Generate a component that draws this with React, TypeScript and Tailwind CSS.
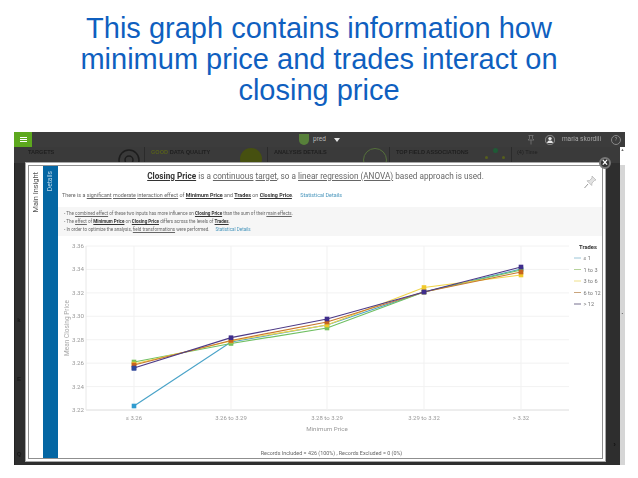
import React from "react";

const px = [135, 232, 328, 425, 522];
const series = [
  { c: "#4aa3c8", m: "#2f9bd0", y: [406, 342, 325, 292, 269] },
  { c: "#6fbf62", m: "#76c05a", y: [362, 343.5, 328, 292, 270] },
  { c: "#f1d54a", m: "#f0c92c", y: [364, 341, 325, 287.5, 275] },
  { c: "#c9792f", m: "#c8641e", y: [365, 340.5, 322, 292, 272] },
  { c: "#4d3a86", m: "#3f2d8c", y: [368, 337.7, 319, 292, 267] },
];
const yLabels = ["3.36", "3.34", "3.32", "3.30", "3.28", "3.26", "3.24", "3.22"];
const xLabels = ["≤ 3.26", "3.26 to 3.29", "3.28 to 3.29", "3.29 to 3.32", "> 3.32"];
const legend = [
  ["≤ 1", "#9cc6d8"],
  ["1 to 3", "#b5d29a"],
  ["3 to 6", "#efe08a"],
  ["6 to 12", "#c9a47c"],
  ["> 12", "#77708f"],
];

function Chart() {
  // coordinates are page pixels; the svg origin sits at page (59, 236)
  const ox = 59;
  const oy = 236;
  return (
    <svg width="544" height="204" viewBox={`${ox} ${oy} 544 204`} className="block shrink-0" style={{ fontFamily: "Roboto, sans-serif" }}>
      {yLabels.map((l, i) => {
        const y = 246 + i * 23.43;
        return (
          <g key={l}>
            <line x1="87" x2="570" y1={y} y2={y} stroke={i === 7 ? "#dcdcdc" : "#f2f2f2"} strokeWidth="1" />
            <text x="85" y={y + 2} fontSize="6.2" textAnchor="end" fill="#999">{l}</text>
          </g>
        );
      })}
      <line x1="87" x2="87" y1="246" y2="410" stroke="#e8e8e8" />
      {px.map((x, i) => (
        <g key={x}>
          <line x1={x} x2={x} y1="246" y2="410" stroke="#f1f1f1" />
          <text x={x} y="419.500" fontSize="6" textAnchor="middle" fill="#999">{xLabels[i]}</text>
        </g>
      ))}
      <text x="328" y="431" fontSize="6.2" textAnchor="middle" fill="#999">Minimum Price</text>
      <text transform="translate(70 328) rotate(-90)" fontSize="6.5" textAnchor="middle" fill="#aaa">Mean Closing Price</text>
      {series.map((s) => (
        <g key={s.c}>
          <polyline points={s.y.map((y, i) => `${px[i]},${y}`).join(" ")} fill="none" stroke={s.c} strokeWidth="1.2" />
          {s.y.map((y, i) => (
            <rect key={i} x={px[i] - 2.3} y={y - 2.3} width="4.6" height="4.6" fill={s.m} />
          ))}
        </g>
      ))}
      <rect x="132.700" y="366" width="4.6" height="4.6" fill="#2b4a9c" />
      <text x="580" y="248.500" fontSize="5.8" fontWeight="700" fill="#333">Trades</text>
      {legend.map(([t, c], i) => (
        <g key={t}>
          <line x1="575" x2="582" y1={258 + i * 11.5} y2={258 + i * 11.5} stroke={c} />
          <text x="584.500" y={260 + i * 11.5} fontSize="5.6" fill="#777">{t}</text>
        </g>
      ))}
    </svg>
  );
}

function Term({ children }: { children: React.ReactNode }) {
  return <span className="font-bold text-[#333] underline">{children}</span>;
}
function Link({ children }: { children: React.ReactNode }) {
  return <span className="underline">{children}</span>;
}

function Panel({ title, className, children }: { title: React.ReactNode; className: string; children?: React.ReactNode }) {
  return (
    <div className={`${className} relative flex h-full shrink-0 border-r border-[#2b2b2b] text-[5.6px] leading-[8px] font-bold whitespace-nowrap text-[#1f1f1f]`}>
      <span className="pt-[1px]">{title}</span>
      {children}
    </div>
  );
}

export default function App() {
  return (
    <div className="h-[478px] w-[638px] overflow-hidden bg-white font-['Liberation_Sans',sans-serif]">
      <h1 className="h-[132px] pt-[13px] text-center text-[29px] leading-[31px] font-normal text-[#0f5fbf]">
        This graph contains information how
        <br />
        minimum price and trades interact on
        <br />
        closing price
      </h1>

      <div className="relative ml-[14px] flex h-[333px] w-[611px] flex-col overflow-hidden blur-[0.45px]">
        {/* app header */}
        <header className="flex h-[15px] shrink-0 items-center bg-[#3c3c3c] font-['Roboto',sans-serif] text-[6.5px] text-[#b8b8b8]">
          <div className="flex h-full w-[18px] flex-col items-center justify-center gap-[1px] bg-[#5da81e]">
            <span className="h-[1px] w-[7px] bg-white" />
            <span className="h-[1px] w-[7px] bg-white" />
            <span className="h-[1px] w-[7px] bg-white" />
          </div>
          <div className="ml-[267px] flex items-center gap-[3px]">
            <span className="h-[11px] w-[10px] rounded-b-full bg-[#57803a]" />
            <span className="ml-[1px]">pred</span>
            <span className="ml-[5px] h-0 w-0 border-x-[3px] border-t-[4px] border-x-transparent border-t-[#e6e6e6]" />
          </div>
          <div className="ml-[187px] flex items-center">
            <svg width="8" height="11" viewBox="0 0 8 11">
              <path d="M1.500 1.500h5M2.500 1.500v3L1 6h6L5.500 4.500v-3M4 6v4.500" fill="none" stroke="#777" strokeWidth=".8" />
            </svg>
            <svg className="ml-[10px]" width="10" height="10" viewBox="0 0 10 10">
              <circle cx="5" cy="5" r="4.700" fill="#444" stroke="#bbb" strokeWidth=".6" />
              <circle cx="5" cy="3.600" r="1.700" fill="#e6e6e6" />
              <path d="M2 8c.5-2 1.500-2.500 3-2.500S7.500 6 8 8z" fill="#e6e6e6" />
            </svg>
            <span className="ml-[7px] text-[#a8a8a8]">maria skordili</span>
            <span className="ml-[10px] flex h-[10px] w-[10px] items-center justify-center rounded-full border border-[#888] text-[5px] text-[#aaa]">?</span>
          </div>
        </header>

        {/* dimmed page behind the dialog */}
        <div className="flex min-h-0 flex-1">
          <div className="flex min-w-0 flex-1 flex-col">
            <div className="flex h-[16px] shrink-0 items-start overflow-hidden bg-[#3a3a3a]">
              <Panel title="TARGETS" className="w-[131px] pl-[14px]">
                <svg className="absolute top-[1px] left-[103px]" width="24" height="16" viewBox="0 0 24 16">
                  <circle cx="12" cy="12" r="10" fill="none" stroke="#1d1d1d" strokeWidth="1.500" />
                  <circle cx="12" cy="12" r="4" fill="none" stroke="#1d1d1d" strokeWidth="1.500" />
                </svg>
              </Panel>
              <Panel title={<><span className="text-[#565f1c]">GOOD</span> DATA QUALITY</>} className="w-[123px] pl-[6px]">
                <span className="absolute top-[1px] left-[95px] h-[22px] w-[22px] rounded-full bg-[#465010]" />
              </Panel>
              <Panel title="ANALYSIS DETAILS" className="w-[122px] pl-[6px]">
                <span className="absolute top-[1px] left-[95px] h-[24px] w-[24px] rounded-full border-[1.5px] border-[#55703a]" />
              </Panel>
              <Panel title="TOP FIELD ASSOCIATIONS" className="w-[122px] pl-[6px]">
                <span className="absolute top-[1px] left-[103px] h-[5px] w-[5px] rounded-full bg-[#1f5a36]" />
                <span className="absolute top-[9px] left-[95px] h-[3px] w-[3px] rounded-full bg-[#565f1c]" />
                <span className="absolute top-[9px] left-[112px] h-[3px] w-[3px] rounded-full bg-[#565f1c]" />
              </Panel>
              <span className="pt-[1px] pl-[5px] text-[5.6px] leading-[8px] text-[#1f1f1f]">(4) Time</span>
            </div>
            <div className="flex min-h-0 flex-1 justify-between bg-[#2e2e2e]">
              <div className="flex w-[11px] shrink-0 flex-col items-center border-l border-[#222] pt-[154px] pr-[2px] text-[6px] leading-none font-bold text-[#1a1a1a]">
                <span>k</span>
                <span className="mt-[53px]">E</span>
                <span className="mt-[69px]">Q</span>
              </div>
              <div className="flex w-[11px] shrink-0 flex-col items-center pt-[278px] text-[8px] leading-none font-bold text-[#151515]">
                <span>›</span>
              </div>
            </div>
          </div>
          <div className="flex w-[5px] shrink-0 flex-col bg-[#d6d6d6] text-center text-[4px] text-[#666]">
            <span className="h-[18px] bg-white leading-[6px]">▲</span>
            <span className="mt-[146px]">▪</span>
          </div>
        </div>

        {/* dialog */}
        <div className="absolute top-[30px] left-[11px] h-[300px] w-[581px] border border-[#a8a8a8] bg-white p-[2px]">
          <div className="flex h-full border border-[#8f8f8f] font-['Roboto',sans-serif]">
            <div className="flex w-[14px] shrink-0 items-start justify-center pt-[6px]">
              <span className="rotate-180 text-[7.4px] text-[#555] [writing-mode:vertical-rl]">Main Insight</span>
            </div>
            <div className="flex w-[15px] shrink-0 items-start justify-center bg-[#0466a3] pt-[5px]">
              <span className="rotate-180 text-[6.6px] text-[#bcd8ea] [writing-mode:vertical-rl]">Details</span>
            </div>
            <div className="relative flex min-w-0 flex-1 flex-col">
              <div className="flex h-[20px] shrink-0 items-center justify-center pr-[29px] text-[8.2px] whitespace-nowrap text-[#666]">
                <span>
                  <Term>Closing Price</Term> is a <Link>continuous</Link> <Link>target</Link>, so a <Link>linear regression (ANOVA)</Link> based approach is used.
                </span>
              </div>
              <div className="mt-[1px] flex h-[16px] shrink-0 items-center pl-1 text-[5.4px] whitespace-nowrap text-[#666]">
                <span>
                  There is a <Link>significant</Link> <Link>moderate</Link> <Link>interaction effect</Link> of <Term>Minimum Price</Term> and <Term>Trades</Term> on <Term>Closing Price</Term>.
                </span>
                <span className="ml-[7px] text-[#4a97bd]">Statistical Details</span>
              </div>
              <div className="mt-[4px] flex h-[29px] shrink-0 flex-col justify-center bg-[#f6f6f6] pl-[6px] text-[4.55px] leading-[8px] whitespace-nowrap text-[#666]">
                <span>
                  - The <Link>combined effect</Link> of these two inputs has more influence on <Term>Closing Price</Term> than the sum of their <Link>main effects</Link>.
                </span>
                <span>
                  - The <Link>effect</Link> of <Term>Minimum Price</Term> on <Term>Closing Price</Term> differs across the levels of <Term>Trades</Term>.
                </span>
                <span>
                  - In order to optimize the analysis, <Link>field transformations</Link> were performed.
                  <span className="ml-[6px] text-[#4a97bd]">Statistical Details</span>
                </span>
              </div>
              <Chart />
              <div className="mt-[9px] pl-[3px] text-center text-[5.4px] leading-[8px] text-[#666]">
                Records Included = 426 (100%) , Records Excluded = 0 (0%)
              </div>
              <svg className="absolute top-[9px] right-[5px]" width="14" height="15" viewBox="0 0 14 15">
                <path d="M9 1l4 4-1.500 .5-2.500 2.500-.3 2.500-4.700-4.700 2.500-.3 2.500-2.500z" fill="#e2e2e2" stroke="#aaa" strokeWidth=".6" />
                <path d="M5 9L1.500 13" stroke="#999" strokeWidth="1" />
              </svg>
            </div>
          </div>
        </div>
        <div className="absolute top-[25px] left-[585px] flex h-[12px] w-[12px] items-center justify-center rounded-full border-2 border-[#777] bg-[#333] font-['Liberation_Sans',sans-serif] text-[10px] leading-none font-bold text-white">
          ×
        </div>
      </div>
    </div>
  );
}
